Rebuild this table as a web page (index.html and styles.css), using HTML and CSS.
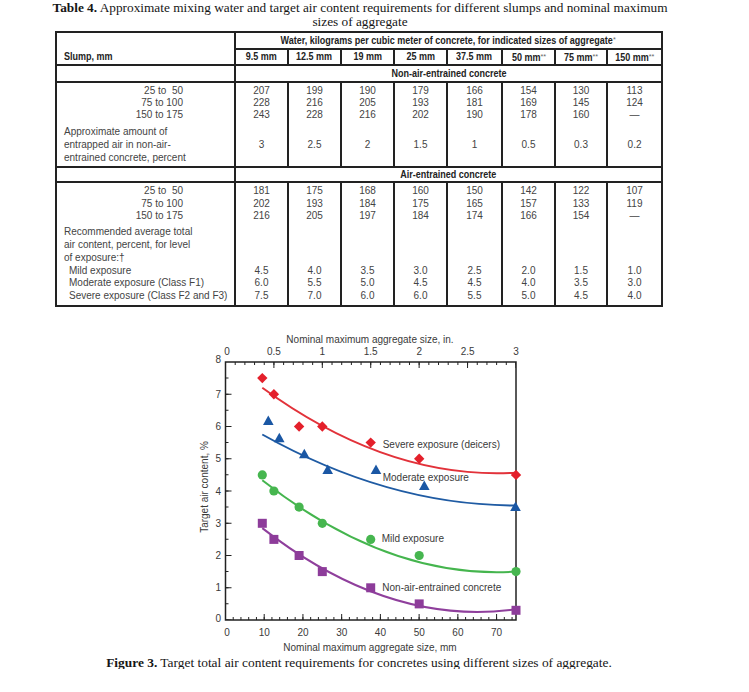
FILE: index.html
```html
<!DOCTYPE html>
<html>
<head>
<meta charset="utf-8">
<link rel="stylesheet" href="styles.css">
</head>
<body>
<div class="page">
  <p class="title"><b>Table 4.</b> Approximate mixing water and target air content requirements for different slumps and nominal maximum<br>sizes of aggregate</p>

  <table class="mix">
    <colgroup>
      <col class="w-lbl"><col class="w53"><col class="w53"><col class="w53"><col class="w53"><col class="w55"><col class="w53"><col class="w52"><col class="w55">
    </colgroup>
    <tr class="r-h1">
      <th class="slump-h" rowspan="2"><span class="cond left">Slump, mm</span></th>
      <th colspan="8"><span class="cond">Water, kilograms per cubic meter of concrete, for indicated sizes of aggregate<span class="ast">*</span></span></th>
    </tr>
    <tr class="r-h2">
      <th><span class="cond">9.5 mm</span></th>
      <th><span class="cond">12.5 mm</span></th>
      <th><span class="cond">19 mm</span></th>
      <th><span class="cond">25 mm</span></th>
      <th><span class="cond">37.5 mm</span></th>
      <th><span class="cond">50 mm<span class="ast">**</span></span></th>
      <th><span class="cond">75 mm<span class="ast">**</span></span></th>
      <th><span class="cond">150 mm<span class="ast">**</span></span></th>
    </tr>
    <tr class="r-sec">
      <td></td>
      <th colspan="8"><span class="cond">Non-air-entrained concrete</span></th>
    </tr>
    <tr class="r-d1">
      <td class="lbl">
        <div class="s1"><div>25 to  50</div><div>75 to 100</div><div>150 to 175</div></div>
        <div class="n1">Approximate amount of<br>entrapped air in non-air-<br>entrained concrete, percent</div>
      </td>
      <td class="num"><div class="s1">207<br>228<br>243</div><div class="n1">&nbsp;<br>3<br>&nbsp;</div></td>
      <td class="num"><div class="s1">199<br>216<br>228</div><div class="n1">&nbsp;<br>2.5<br>&nbsp;</div></td>
      <td class="num"><div class="s1">190<br>205<br>216</div><div class="n1">&nbsp;<br>2<br>&nbsp;</div></td>
      <td class="num"><div class="s1">179<br>193<br>202</div><div class="n1">&nbsp;<br>1.5<br>&nbsp;</div></td>
      <td class="num"><div class="s1">166<br>181<br>190</div><div class="n1">&nbsp;<br>1<br>&nbsp;</div></td>
      <td class="num"><div class="s1">154<br>169<br>178</div><div class="n1">&nbsp;<br>0.5<br>&nbsp;</div></td>
      <td class="num"><div class="s1">130<br>145<br>160</div><div class="n1">&nbsp;<br>0.3<br>&nbsp;</div></td>
      <td class="num"><div class="s1">113<br>124<br>—</div><div class="n1">&nbsp;<br>0.2<br>&nbsp;</div></td>
    </tr>
    <tr class="r-sec2">
      <td></td>
      <th colspan="8"><span class="cond">Air-entrained concrete</span></th>
    </tr>
    <tr class="r-d2">
      <td class="lbl">
        <div class="s2"><div>25 to  50</div><div>75 to 100</div><div>150 to 175</div></div>
        <div class="n2">Recommended average total<br>air content, percent, for level<br>of exposure:†</div>
        <div class="e2 ind">Mild exposure<br>Moderate exposure (Class F1)<br>Severe exposure (Class F2 and F3)</div>
      </td>
      <td class="num"><div class="s2">181<br>202<br>216</div><div class="n2">&nbsp;<br>&nbsp;<br>&nbsp;</div><div class="e2">4.5<br>6.0<br>7.5</div></td>
      <td class="num"><div class="s2">175<br>193<br>205</div><div class="n2">&nbsp;<br>&nbsp;<br>&nbsp;</div><div class="e2">4.0<br>5.5<br>7.0</div></td>
      <td class="num"><div class="s2">168<br>184<br>197</div><div class="n2">&nbsp;<br>&nbsp;<br>&nbsp;</div><div class="e2">3.5<br>5.0<br>6.0</div></td>
      <td class="num"><div class="s2">160<br>175<br>184</div><div class="n2">&nbsp;<br>&nbsp;<br>&nbsp;</div><div class="e2">3.0<br>4.5<br>6.0</div></td>
      <td class="num"><div class="s2">150<br>165<br>174</div><div class="n2">&nbsp;<br>&nbsp;<br>&nbsp;</div><div class="e2">2.5<br>4.5<br>5.5</div></td>
      <td class="num"><div class="s2">142<br>157<br>166</div><div class="n2">&nbsp;<br>&nbsp;<br>&nbsp;</div><div class="e2">2.0<br>4.0<br>5.0</div></td>
      <td class="num"><div class="s2">122<br>133<br>154</div><div class="n2">&nbsp;<br>&nbsp;<br>&nbsp;</div><div class="e2">1.5<br>3.5<br>4.5</div></td>
      <td class="num"><div class="s2">107<br>119<br>—</div><div class="n2">&nbsp;<br>&nbsp;<br>&nbsp;</div><div class="e2">1.0<br>3.0<br>4.0</div></td>
    </tr>
  </table>

  <svg class="chart" width="370" height="333" viewBox="180 322 370 333">
    <g class="ax-text">
      <text x="370" y="338.5" text-anchor="middle">Nominal maximum aggregate size, in.</text>
      <text x="227" y="350.5" text-anchor="middle">0</text>
      <text x="273.9" y="350.5" text-anchor="middle">0.5</text>
      <text x="322.3" y="350.5" text-anchor="middle">1</text>
      <text x="370.7" y="350.5" text-anchor="middle">1.5</text>
      <text x="419.2" y="350.5" text-anchor="middle">2</text>
      <text x="467.6" y="350.5" text-anchor="middle">2.5</text>
      <text x="516" y="350.5" text-anchor="middle">3</text>

      <text x="221" y="358" text-anchor="end">8</text>
      <text x="221" y="393.25" text-anchor="end">7</text>
      <text x="221" y="425.5" text-anchor="end">6</text>
      <text x="221" y="457.75" text-anchor="end">5</text>
      <text x="221" y="490" text-anchor="end">4</text>
      <text x="221" y="522.25" text-anchor="end">3</text>
      <text x="221" y="554.5" text-anchor="end">2</text>
      <text x="221" y="586.75" text-anchor="end">1</text>
      <text x="221" y="617" text-anchor="end">0</text>

      <text x="227" y="631" text-anchor="middle">0</text>
      <text x="264.2" y="631" text-anchor="middle">10</text>
      <text x="303" y="631" text-anchor="middle">20</text>
      <text x="341.7" y="631" text-anchor="middle">30</text>
      <text x="380.4" y="631" text-anchor="middle">40</text>
      <text x="419.2" y="631" text-anchor="middle">50</text>
      <text x="457.9" y="631" text-anchor="middle">60</text>
      <text x="496.6" y="631" text-anchor="middle">70</text>
      <text x="370" y="646" text-anchor="middle">Nominal maximum aggregate size, mm</text>

      <text transform="translate(204 486) rotate(-90)" text-anchor="middle">Target air content, %</text>
    </g>

    <rect class="frame" x="225.5" y="361" width="290.5" height="258"/>
    <line class="tick" x1="232.7" y1="617.5" x2="516" y2="617.5" stroke-width="3" stroke-dasharray="1 6.746"/>
    <line class="tick" x1="263.7" y1="616" x2="516" y2="616" stroke-width="6" stroke-dasharray="1 37.73"/>
    <line class="tick" x1="234.7" y1="362.5" x2="516" y2="362.5" stroke-width="3" stroke-dasharray="1 8.682"/>
    <line class="tick" x1="273.4" y1="364" x2="516" y2="364" stroke-width="6" stroke-dasharray="1 47.41"/>
    <line class="tick" x1="227" y1="376.6" x2="227" y2="619" stroke-width="3" stroke-dasharray="1 15.125"/>
    <line class="tick" x1="228.5" y1="392.75" x2="228.5" y2="619" stroke-width="6" stroke-dasharray="1 31.25"/>

    <path class="c-red" d="M262.3 386.8 Q389.1 479.3 516 471.7"/>
    <path class="c-blue" d="M262.3 433.5 Q389.1 504.5 516 504.5"/>
    <path class="c-green" d="M262.3 479.3 Q389.1 578.9 516 570.6"/>
    <path class="c-purple" d="M262.3 527.1 Q389.1 626 516 608.2"/>

    <g class="m-red">
      <path d="M262.3 371.9l5.2 5.2-5.2 5.2-5.2-5.2z"/>
      <path d="M273.9 388.1l5.2 5.2-5.2 5.2-5.2-5.2z"/>
      <path d="M299.1 420.3l5.2 5.2-5.2 5.2-5.2-5.2z"/>
      <path d="M322.3 420.3l5.2 5.2-5.2 5.2-5.2-5.2z"/>
      <path d="M370.7 436.4l5.2 5.2-5.2 5.2-5.2-5.2z"/>
      <path d="M419.2 452.6l5.2 5.2-5.2 5.2-5.2-5.2z"/>
      <path d="M516 468.7l5.2 5.2-5.2 5.2-5.2-5.2z"/>
    </g>
    <g class="m-blue">
      <path d="M268.3 414.5l5.3 9.5h-10.6z"/>
      <path d="M279.3 431.8l5.3 9.5h-10.6z"/>
      <path d="M304.3 447.8l5.3 9.5h-10.6z"/>
      <path d="M327.7 463.5l5.3 9.5h-10.6z"/>
      <path d="M376 463.5l5.3 9.5h-10.6z"/>
      <path d="M424.3 479.5l5.3 9.5h-10.6z"/>
      <path d="M515.5 500.5l5.3 9.5h-10.6z"/>
    </g>
    <g class="m-green">
      <circle cx="262.3" cy="473.9" r="4.6"/>
      <circle cx="273.9" cy="490" r="4.6"/>
      <circle cx="299.1" cy="506.1" r="4.6"/>
      <circle cx="322.3" cy="522.3" r="4.6"/>
      <circle cx="370.7" cy="538.4" r="4.6"/>
      <circle cx="419.2" cy="554.5" r="4.6"/>
      <circle cx="516" cy="570.6" r="4.6"/>
    </g>
    <g class="m-purple">
      <rect x="257.8" y="517.8" width="9" height="9"/>
      <rect x="269.4" y="533.9" width="9" height="9"/>
      <rect x="294.6" y="550" width="9" height="9"/>
      <rect x="317.8" y="566.1" width="9" height="9"/>
      <rect x="366.2" y="582.3" width="9" height="9"/>
      <rect x="414.7" y="598.4" width="9" height="9"/>
      <rect x="511.5" y="604.8" width="9" height="9"/>
    </g>

    <g class="ax-text">
      <text x="382.7" y="443">Severe exposure (deicers)</text>
      <text x="382.7" y="476">Moderate exposure</text>
      <text x="381.7" y="537">Mild exposure</text>
      <text x="382.3" y="586">Non-air-entrained concrete</text>
    </g>
  </svg>

  <p class="caption"><b>Figure 3.</b> Target total air content requirements for concretes using different sizes of aggregate.</p>
</div>
</body>
</html>
```

FILE: styles.css
```css
html, body {
  margin: 0;
  padding: 0;
  background: #ffffff;
}

.page {
  width: 749px;
  color: #111;
}

.title {
  width: 720px;
  margin: 0;
  padding-top: 1px;
  font-family: "Liberation Serif", "Times New Roman", serif;
  font-size: 13.3px;
  line-height: 13.5px;
  text-align: center;
  color: #161616;
}

/* ---------- table ---------- */
.mix {
  margin: 3px 0 0 55px;
  border-collapse: collapse;
  table-layout: fixed;
  width: 606px;
  font-family: "Liberation Sans", Arial, sans-serif;
}

.w-lbl { width: 179px; }
.w53 { width: 53px; }
.w52 { width: 52px; }
.w55 { width: 55px; }

.mix th,
.mix td {
  border: 2px solid #222;
  padding: 0;
}

.mix th {
  font-weight: bold;
  font-size: 10px;
  line-height: 12px;
  color: #222;
  text-align: center;
  vertical-align: middle;
  white-space: nowrap;
  overflow: hidden;
}

.cond {
  display: inline-block;
  transform: scaleX(0.9);
  transform-origin: center;
  white-space: nowrap;
}

.cond.left {
  transform-origin: left center;
}

.ast {
  font-weight: normal;
  color: #666;
  font-size: 8px;
  vertical-align: 2px;
}

.slump-h {
  text-align: left !important;
  vertical-align: bottom !important;
  padding: 0 0 1px 7px !important;
}

.r-h1 th { height: 15px; }
.r-h2 th { height: 14px; }
.r-sec th, .r-sec td { height: 15px; }
.r-sec2 th, .r-sec2 td { height: 13px; }

.r-d1 td,
.r-d2 td {
  vertical-align: top;
  font-size: 10px;
  color: #444;
  padding-top: 2px;
}

.r-d1 td { height: 81px; }
.r-d2 td { height: 120px; }

.num {
  text-align: center;
}

.lbl .s1,
.lbl .s2 {
  text-align: right;
  padding-right: 51px;
  white-space: pre;
}

.lbl .n1,
.lbl .n2,
.lbl .e2 {
  padding-left: 7px;
  white-space: nowrap;
}

.lbl .ind {
  padding-left: 12px;
}

.s1 { line-height: 12px; }
.n1 { line-height: 13px; margin-top: 3.5px; }

.s2 { line-height: 12.5px; }
.n2 { line-height: 13px; margin-top: 2px; }
.e2 { line-height: 12.5px; margin-top: 1.25px; }

/* ---------- chart ---------- */
.chart {
  display: block;
  margin: 16px 0 0 180px;
}

.ax-text text {
  font-family: "Liberation Sans", Arial, sans-serif;
  font-size: 10px;
  fill: #3a3a3a;
  dominant-baseline: central;
}

.frame {
  fill: none;
  stroke: #222;
  stroke-width: 1.5;
}

.tick {
  stroke: #222;
}

.c-red, .c-blue, .c-green, .c-purple {
  fill: none;
  stroke-width: 2;
}

.c-red { stroke: #e2323a; }
.c-blue { stroke: #1f5ba3; }
.c-green { stroke: #45b54e; }
.c-purple { stroke: #8f3f9c; }

.m-red { fill: #e4202b; }
.m-blue { fill: #1a57a4; }
.m-green { fill: #46b64f; }
.m-purple { fill: #8d3c9a; }

/* ---------- caption ---------- */
.caption {
  width: 718px;
  margin: 0;
  font-family: "Liberation Serif", "Times New Roman", serif;
  font-size: 13.4px;
  line-height: 13px;
  text-align: center;
  color: #161616;
}
```
